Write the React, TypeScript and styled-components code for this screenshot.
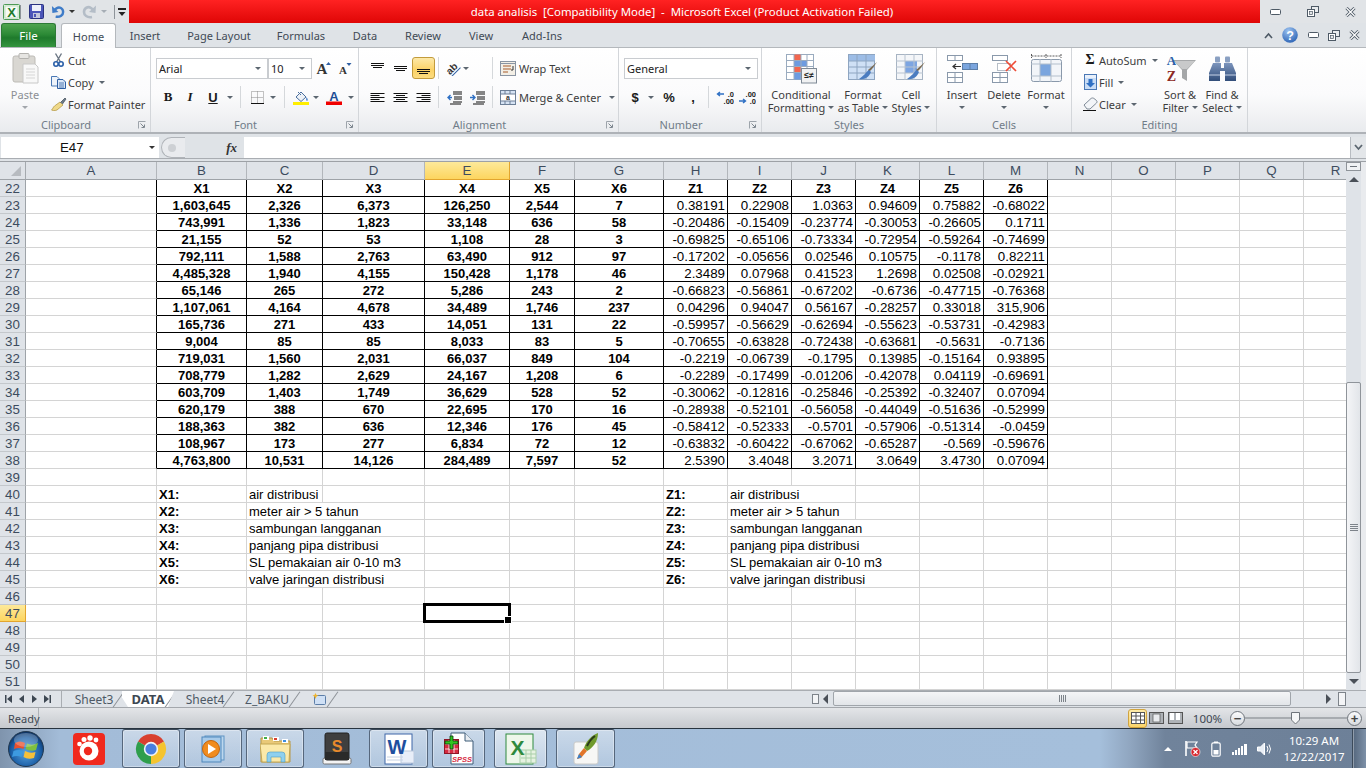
import React from "react";
import styled, { createGlobalStyle } from "styled-components";

const UI_FONT = `"Noto Sans", "Open Sans", sans-serif`;
const CELL_FONT = `"Liberation Sans", Arial, sans-serif`;

const GlobalStyle = createGlobalStyle`
  html, body { margin: 0; padding: 0; background: #dfe3e7; overflow: hidden; }
  * { box-sizing: border-box; }
`;

const Window = styled.div`
  width: 1366px;
  height: 768px;
  display: flex;
  flex-direction: column;
  overflow: hidden;
  background: #dfe3e7;
  font-family: ${UI_FONT};
  font-size: 11px;
  color: #3c3c3c;
`;

/* ---------- title bar ---------- */
const TitleBar = styled.div`
  height: 23px;
  flex: none;
  display: flex;
  background: #e1e4e7;
`;
const Qat = styled.div`
  width: 129px;
  flex: none;
  display: flex;
  align-items: center;
  padding-left: 2px;
`;
const QatSlot = styled.div<{ $w: number }>`
  width: ${(p) => p.$w}px;
  height: 20px;
  flex: none;
  display: flex;
  align-items: center;
  justify-content: center;
`;
const QatSep = styled.div`
  width: 1px;
  height: 14px;
  background: #8d9399;
  flex: none;
`;
const TitleRed = styled.div`
  flex: 1;
  display: flex;
  align-items: center;
  justify-content: center;
  padding-right: 25px;
  background: linear-gradient(#ff2222, #df0606);
  color: #fff;
  font-size: 11.4px;
  white-space: pre;
`;
const WinControls = styled.div`
  width: 106px;
  flex: none;
  display: flex;
  align-items: center;
  padding: 0 10px 0 10px;
  justify-content: space-between;
`;

/* ---------- tabs ---------- */
const TabStrip = styled.div`
  height: 25px;
  flex: none;
  display: flex;
  align-items: flex-end;
  padding-left: 1px;
  background: #dfe3e7;
  border-bottom: 1px solid #b4b8bc;
`;
const FileTab = styled.div`
  width: 55px;
  height: 24px;
  margin-right: 5px;
  display: flex;
  align-items: center;
  justify-content: center;
  color: #fff;
  font-size: 11.5px;
  border: 1px solid #2d7a36;
  border-bottom: none;
  border-radius: 3px 3px 0 0;
  background: linear-gradient(#4ea44f, #2c8a36 45%, #1f7a2c 60%, #35963f);
`;
const Tab = styled.div<{ $w: number; $active?: boolean }>`
  width: ${(p) => p.$w}px;
  height: ${(p) => (p.$active ? 25 : 24)}px;
  display: flex;
  align-items: center;
  justify-content: center;
  font-size: 11px;
  color: #3f4a55;
  ${(p) =>
    p.$active &&
    `background: linear-gradient(#fff, #fbfbfc);
     border: 1px solid #b4b8bc;
     border-bottom: none;
     border-radius: 3px 3px 0 0;
     margin-bottom: -1px;
     position: relative;`}
`;
const TabRight = styled.div`
  margin-left: auto;
  width: 112px;
  height: 24px;
  display: flex;
  align-items: center;
  justify-content: space-between;
  padding: 0 6px 0 10px;
`;

/* ---------- ribbon ---------- */
const Ribbon = styled.div`
  height: 86px;
  flex: none;
  display: flex;
  background: linear-gradient(#ffffff 0, #fbfbfc 55%, #e9ebee 100%);
  border-bottom: 2px solid #aeb2b7;
`;
const Group = styled.div<{ $w: number }>`
  width: ${(p) => p.$w}px;
  flex: none;
  display: flex;
  flex-direction: column;
  position: relative;
  border-right: 1px solid #d3d6da;
`;
const GroupBody = styled.div<{ $pl?: number; $top?: number; $row?: boolean }>`
  flex: 1;
  display: flex;
  flex-direction: ${(p) => (p.$row ? "row" : "column")};
  padding-left: ${(p) => p.$pl ?? 0}px;
  padding-top: ${(p) => p.$top ?? 0}px;
  gap: ${(p) => (p.$row ? 0 : 7)}px;
`;
const GroupLabel = styled.div<{ $launch?: boolean }>`
  height: 14px;
  flex: none;
  text-align: center;
  line-height: 14px;
  padding-right: ${(p) => (p.$launch ? 18 : 0)}px;
  color: #707c88;
  font-size: 11px;
`;
const Launcher = styled.div`
  position: absolute;
  right: 4px;
  bottom: 3px;
  line-height: 0;
`;
const ToolRow = styled.div`
  height: 22px;
  display: flex;
  align-items: center;
`;
const Tool = styled.div<{ $w: number; $ml?: number; $on?: boolean }>`
  width: ${(p) => p.$w}px;
  height: 22px;
  flex: none;
  margin-left: ${(p) => p.$ml ?? 0}px;
  display: flex;
  align-items: center;
  justify-content: center;
  gap: 2px;
  color: #111;
  ${(p) =>
    p.$on &&
    `background: linear-gradient(#fde9a8, #fbd266 60%, #fcdc80);
     border: 1px solid #c29b3c;
     border-radius: 3px;`}
`;
const ToolSep = styled.div<{ $w: number; $ml?: number }>`
  width: ${(p) => p.$w}px;
  margin-left: ${(p) => p.$ml ?? 0}px;
  height: 22px;
  flex: none;
  display: flex;
  justify-content: center;
  &::after {
    content: "";
    width: 1px;
    height: 100%;
    background: #d5d8db;
  }
`;
const Combo = styled.div<{ $w: number }>`
  width: ${(p) => p.$w}px;
  height: 21px;
  flex: none;
  display: flex;
  align-items: center;
  justify-content: space-between;
  padding: 0 6px 0 2px;
  background: #fff;
  border: 1px solid #c9ccd0;
  color: #222;
  font-size: 11px;
`;
const Caret = styled.span<{ $c?: string }>`
  display: inline-block;
  flex: none;
  width: 0;
  height: 0;
  border-left: 3px solid transparent;
  border-right: 3px solid transparent;
  border-top: 3px solid ${(p) => p.$c ?? "#5c6670"};
`;
const PasteCaret = styled(Caret)`
  margin-top: 5px;
`;
const TrayCaret = styled.span`
  width: 0;
  height: 0;
  border-left: 4px solid transparent;
  border-right: 4px solid transparent;
  border-bottom: 4px solid #fff;
`;
const BoldGlyph = styled.span<{ $serif?: boolean; $italic?: boolean; $under?: boolean; $size?: number }>`
  font-family: ${(p) => (p.$serif ? `"Liberation Serif", serif` : CELL_FONT)};
  font-weight: 700;
  font-style: ${(p) => (p.$italic ? "italic" : "normal")};
  font-size: ${(p) => p.$size ?? 13}px;
  text-decoration: ${(p) => (p.$under ? "underline" : "none")};
  color: #1a1a1a;
`;
const SmallStack = styled.div<{ $w: number; $pl?: number }>`
  width: ${(p) => p.$w}px;
  flex: none;
  padding-left: ${(p) => p.$pl ?? 0}px;
  display: flex;
  flex-direction: column;
`;
const SmallItem = styled.div<{ $iconW?: number }>`
  height: 22px;
  display: flex;
  align-items: center;
  white-space: nowrap;
  & > :first-child {
    width: ${(p) => p.$iconW ?? 19}px;
    flex: none;
  }
`;
const IconWrap = styled.span`
  display: flex;
  justify-content: center;
`;
const CaretGap = styled.span`
  display: inline-flex;
  margin-left: 5px;
`;
const TextTool = styled.div`
  display: flex;
  align-items: center;
  padding-left: 5px;
  height: 22px;
  gap: 3px;
  white-space: nowrap;
  color: #3c3c3c;
`;
const PasteBtn = styled.div`
  width: 36px;
  margin-left: 7px;
  flex: none;
  display: flex;
  flex-direction: column;
  align-items: center;
  color: #8b8f94;
  padding-top: 4px;
`;
const PasteText = styled.div`
  margin-top: 4px;
  line-height: 13px;
`;
const Large = styled.div<{ $w: number }>`
  width: ${(p) => p.$w}px;
  flex: none;
  display: flex;
  flex-direction: column;
  align-items: center;
  color: #3c3c3c;
`;
const LargeIcon = styled.div`
  height: 39px;
  display: flex;
  align-items: center;
  justify-content: center;
`;
const LargeLine = styled.div`
  height: 13px;
  line-height: 13px;
  white-space: nowrap;
  display: flex;
  align-items: center;
  justify-content: center;
  gap: 3px;
`;
const RibbonRest = styled.div`
  flex: 1;
`;

/* ---------- formula bar ---------- */
const FormulaBar = styled.div`
  height: 21px;
  margin-top: 3px;
  flex: none;
  display: flex;
  background: #dfe3e7;
`;
const NameBox = styled.div`
  width: 158px;
  margin-left: 1px;
  flex: none;
  background: #fff;
  display: flex;
  align-items: center;
  justify-content: space-between;
  padding: 0 4px 0 59px;
  font-family: ${CELL_FONT};
  font-size: 13.3px;
  color: #111;
`;
const FxBox = styled.div`
  width: 85px;
  flex: none;
  display: flex;
  align-items: center;
  justify-content: flex-end;
  padding-right: 7px;
  position: relative;
  background: #dfe3e7;
  font-family: "Liberation Serif", serif;
  font-style: italic;
  font-weight: 700;
  font-size: 13px;
  color: #333;
`;
const Knob = styled.div`
  position: absolute;
  left: 2px;
  top: 0;
  width: 24px;
  height: 21px;
  border: 1px solid #b0b4b9;
  border-right: none;
  border-radius: 11px 0 0 11px;
  background: #e9ebee;
  &::after {
    content: "";
    position: absolute;
    left: 6px;
    top: 6px;
    width: 8px;
    height: 8px;
    border-radius: 50%;
    background: #cdd0d4;
  }
`;
const FormulaInput = styled.div`
  flex: 1;
  background: #fff;
`;
const ExpandBtn = styled.div`
  width: 16px;
  flex: none;
  display: flex;
  align-items: center;
  justify-content: center;
  border-left: 1px solid #b8bcc1;
  background: #e3e6e9;
`;
const FormulaGap = styled.div`
  height: 3px;
  flex: none;
  background: #dfe3e7;
  border-top: 1px solid #a9adb2;
`;

/* ---------- sheet ---------- */
const SheetArea = styled.div`
  height: 529px;
  flex: none;
  display: flex;
  border-top: 1px solid #9da1a6;
`;
const GridPane = styled.div`
  width: 1346px;
  flex: none;
  overflow: hidden;
  position: relative;
  background: #fff;
  font-family: ${CELL_FONT};
  font-size: 13.33px;
  color: #000;
`;
const COLS = [
  { l: "A", w: 131 },
  { l: "B", w: 90 },
  { l: "C", w: 76 },
  { l: "D", w: 102 },
  { l: "E", w: 85 },
  { l: "F", w: 65 },
  { l: "G", w: 89 },
  { l: "H", w: 64 },
  { l: "I", w: 64 },
  { l: "J", w: 64 },
  { l: "K", w: 64 },
  { l: "L", w: 64 },
  { l: "M", w: 64 },
  { l: "N", w: 64 },
  { l: "O", w: 64 },
  { l: "P", w: 64 },
  { l: "Q", w: 64 },
  { l: "R", w: 64 },
];
const GRID_TEMPLATE = `26px ${COLS.map((c) => c.w + "px").join(" ")}`;
const SheetRow = styled.div<{ $h: number }>`
  display: grid;
  grid-template-columns: ${GRID_TEMPLATE};
  height: ${(p) => p.$h}px;
  width: 1500px;
`;
const HEAD_BG = "#dfe3e8";
const SEL_BG = "linear-gradient(#fde99a, #fdd55f)";
const Corner = styled.div`
  background: ${HEAD_BG};
  border-right: 1px solid #a4a9ae;
  border-bottom: 1px solid #9ea3a8;
  position: relative;
  &::after {
    content: "";
    position: absolute;
    right: 4px;
    bottom: 3px;
    width: 0;
    height: 0;
    border-left: 10px solid transparent;
    border-bottom: 10px solid #b7bbc0;
  }
`;
const ColHead = styled.div<{ $sel?: boolean }>`
  background: ${(p) => (p.$sel ? SEL_BG : HEAD_BG)};
  border-right: 1px solid ${(p) => (p.$sel ? "#e2a52e" : "#b2b6bb")};
  border-bottom: 1px solid ${(p) => (p.$sel ? "#e2a52e" : "#9ea3a8")};
  display: flex;
  align-items: center;
  justify-content: center;
  color: #3d4c5e;
`;
const RowHead = styled.div<{ $sel?: boolean }>`
  background: ${(p) => (p.$sel ? SEL_BG : HEAD_BG)};
  border-right: 1px solid ${(p) => (p.$sel ? "#e2a52e" : "#9ea3a8")};
  border-bottom: 1px solid ${(p) => (p.$sel ? "#e2a52e" : "#c4c8cc")};
  display: flex;
  align-items: center;
  justify-content: center;
  color: #3d4c5e;
`;
const Cell = styled.div<{
  $right?: boolean;
  $bottom?: boolean;
  $align?: string;
  $bold?: boolean;
  $span?: number;
  $legend?: boolean;
}>`
  position: relative;
  grid-column: span ${(p) => p.$span ?? 1};
  border-right: 1px solid ${(p) => (p.$right ? "#000" : "#d4d4d4")};
  border-bottom: 1px solid ${(p) => (p.$bottom ? "#000" : "#d4d4d4")};
  display: flex;
  align-items: center;
  justify-content: ${(p) => p.$align ?? "flex-start"};
  padding: 0 2px;
  font-weight: ${(p) => (p.$bold ? 700 : 400)};
  font-size: ${(p) => (p.$bold || p.$legend ? 13 : 13.33)}px;
  white-space: nowrap;
`;
const Cursor = styled.div`
  position: absolute;
  left: -2px;
  top: -2px;
  width: 88px;
  height: 20px;
  border: 3px solid #000;
  z-index: 2;
  &::after {
    content: "";
    position: absolute;
    right: -4px;
    bottom: -4px;
    width: 6px;
    height: 6px;
    background: #000;
    border: 1px solid #fff;
  }
`;
const VScroll = styled.div`
  width: 15px;
  flex: none;
  display: flex;
  flex-direction: column;
  align-items: center;
  background: #dfe3e8;
`;
const SplitBox = styled.div`
  width: 15px;
  height: 9px;
  flex: none;
  background: #f0f2f4;
  border: 1px solid #8e9399;
  display: flex;
  align-items: center;
  justify-content: center;
  &::after {
    content: "";
    width: 7px;
    height: 1px;
    background: #6d737a;
  }
`;
const ArrowUp = styled.div`
  margin-top: 6px;
  width: 0;
  height: 0;
  border-left: 5px solid transparent;
  border-right: 5px solid transparent;
  border-bottom: 5px solid #4a5058;
`;
const ArrowDown = styled.div`
  margin-top: 6px;
  width: 0;
  height: 0;
  border-left: 5px solid transparent;
  border-right: 5px solid transparent;
  border-top: 5px solid #4a5058;
`;
const VThumb = styled.div`
  margin-top: 200px;
  width: 15px;
  height: 291px;
  flex: none;
  background: linear-gradient(90deg, #f4f5f7, #e2e5e9);
  border: 1px solid #8f949a;
  border-radius: 2px;
  display: flex;
  align-items: center;
  justify-content: center;
`;
const GripLines = styled.div<{ $vertical?: boolean }>`
  width: ${(p) => (p.$vertical ? 7 : 8)}px;
  height: 7px;
  background: repeating-linear-gradient(
    ${(p) => (p.$vertical ? "90deg" : "0deg")},
    #7d838a 0 1px,
    transparent 1px 2px
  );
`;
const RightEdge = styled.div`
  width: 5px;
  flex: none;
  background: #e9ebee;
`;

/* ---------- sheet tabs + h scroll ---------- */
const SheetBar = styled.div`
  height: 17px;
  flex: none;
  display: flex;
  align-items: stretch;
  background: #dfe3e8;
  border-top: 1px solid #a9adb2;
`;
const NavArrows = styled.div`
  width: 62px;
  flex: none;
  padding: 0 10px 0 5px;
  display: flex;
  align-items: center;
  justify-content: space-between;
  border-right: 1px solid #a9adb2;
`;
const SheetTab = styled.div<{ $w: number; $active?: boolean }>`
  width: ${(p) => p.$w}px;
  flex: none;
  position: relative;
  display: flex;
  align-items: center;
  justify-content: center;
  padding-left: 4px;
  font-size: ${(p) => (p.$active ? 13 : 12)}px;
  font-weight: ${(p) => (p.$active ? 700 : 400)};
  color: ${(p) => (p.$active ? "#3d4752" : "#4d5966")};
  ${(p) =>
    p.$active
      ? `background: #fff;
     clip-path: polygon(0 0, 100% 0, calc(100% - 6px) 100%, 6px 100%, 0 40%);
     padding-left: 0;`
      : ""}
  &::after {
    content: "";
    position: absolute;
    right: 3px;
    top: -1px;
    height: 19px;
    width: 1px;
    background: #8d9298;
    transform: rotate(35deg);
  }
`;
const HSpacer = styled.div`
  flex: 1;
`;
const HSplit = styled.div`
  width: 7px;
  margin: 3px 4px 3px 0;
  flex: none;
  background: #f3f4f6;
  border: 1px solid #7d838a;
`;
const HArrow = styled.div<{ $left?: boolean; $ml?: number }>`
  width: 0;
  height: 0;
  flex: none;
  align-self: center;
  margin-left: ${(p) => p.$ml ?? 0}px;
  border-top: 5px solid transparent;
  border-bottom: 5px solid transparent;
  ${(p) => (p.$left ? "border-right" : "border-left")}: 5px solid #4a5058;
`;
const HThumb = styled.div`
  width: 458px;
  margin: 0 0 1px 5px;
  flex: none;
  background: linear-gradient(#f4f5f7, #e2e5e9);
  border: 1px solid #a0a5ab;
  border-radius: 2px;
  display: flex;
  align-items: center;
  justify-content: center;
`;
const HEndBox = styled.div`
  width: 8px;
  margin: 1px 20px 1px 7px;
  flex: none;
  background: #f3f4f6;
  border: 1px solid #7d838a;
`;

/* ---------- status bar ---------- */
const StatusBar = styled.div`
  height: 21px;
  flex: none;
  display: flex;
  align-items: center;
  background: linear-gradient(#e3e5e8, #c6c9ce);
  border-top: 1px solid #a3a7ac;
  color: #3d4752;
  font-size: 11px;
`;
const ReadyText = styled.div`
  width: 39px;
  flex: none;
  height: 100%;
  display: flex;
  align-items: center;
  padding-left: 8px;
  border-right: 1px solid #aeb2b7;
`;
const StatusRight = styled.div`
  margin-left: auto;
  display: flex;
  align-items: center;
  height: 100%;
  padding-right: 4px;
`;
const ViewBtn = styled.div<{ $on?: boolean }>`
  width: 19px;
  height: 19px;
  display: flex;
  align-items: center;
  justify-content: center;
  ${(p) =>
    p.$on &&
    `background: linear-gradient(#fdeaa8, #fbd46b);
     border: 1px solid #d0a33f;
     border-radius: 3px;`}
`;
const ZoomPct = styled.div`
  width: 45px;
  text-align: center;
  font-size: 11.5px;
`;
const ZoomCircle = styled.div`
  width: 15px;
  height: 15px;
  border-radius: 50%;
  flex: none;
  border: 1px solid #6e747b;
  background: linear-gradient(#fbfbfc, #d8dbdf);
  display: flex;
  align-items: center;
  justify-content: center;
  font: 700 13px/1 ${CELL_FONT};
  color: #444;
`;
const ZoomTrack = styled.div`
  width: 102px;
  height: 15px;
  position: relative;
  display: flex;
  align-items: center;
  &::before {
    content: "";
    width: 100%;
    height: 2px;
    background: #a7abb0;
  }
`;
const ZoomThumb = styled.div`
  position: absolute;
  left: 46px;
  top: 1px;
  line-height: 0;
`;

/* ---------- taskbar ---------- */
const Taskbar = styled.div`
  height: 40px;
  flex: none;
  display: flex;
  align-items: stretch;
  background: linear-gradient(90deg, #7f94ad 0, #a3bcd8 60px, #a5bfdb 1100px, #90a6c0 1130px, #70839b 1165px, #6d8098 1366px);
  border-top: 1px solid #28333f;
`;
const Orb = styled.div`
  width: 52px;
  flex: none;
  padding-left: 8px;
  display: flex;
  align-items: center;
`;
const PlainIcon = styled.div<{ $w: number; $ml?: number }>`
  width: ${(p) => p.$w}px;
  margin-left: ${(p) => p.$ml ?? 0}px;
  flex: none;
  display: flex;
  align-items: center;
  justify-content: center;
`;
const TaskBtn = styled.div<{ $w: number; $ml?: number; $active?: boolean }>`
  width: ${(p) => p.$w}px;
  margin-left: ${(p) => p.$ml ?? 0}px;
  flex: none;
  display: flex;
  align-items: center;
  justify-content: center;
  border: 1px solid #56677c;
  border-top-color: #3c4a5a;
  border-radius: 3px;
  background: linear-gradient(
    rgba(255, 255, 255, ${(p) => (p.$active ? 0.62 : 0.42)}),
    rgba(255, 255, 255, ${(p) => (p.$active ? 0.3 : 0.14)})
  );
  box-shadow: inset 0 0 0 1px rgba(255, 255, 255, 0.35);
`;
const Tray = styled.div`
  margin-left: auto;
  display: flex;
  align-items: center;
`;
const TrayIcon = styled.div`
  width: 24px;
  flex: none;
  display: flex;
  align-items: center;
  justify-content: center;
`;
const Clock = styled.div`
  width: 76px;
  flex: none;
  text-align: center;
  color: #fff;
  font-size: 11.5px;
  line-height: 16px;
`;
const ShowDesktop = styled.div`
  width: 14px;
  height: 100%;
  flex: none;
  background: linear-gradient(90deg, #55677d, #7e91a8);
  border-left: 1px solid #3c4a5a;
  box-shadow: inset 1px 0 0 rgba(255, 255, 255, 0.35);
`;

/* ---------- drawn icons ---------- */
const Ico: React.FC<{ w: number; h: number; children: React.ReactNode }> = ({ w, h, children }) => (
  <svg width={w} height={h} viewBox={`0 0 ${w} ${h}`} style={{ display: "block" }}>
    {children}
  </svg>
);

const AppExcel = () => (
  <Ico w={17} h={18}>
    <rect x="0.5" y="1.5" width="16" height="15" rx="1" fill="#e9f4e6" stroke="#4d9a55" />
    <rect x="2" y="3" width="13" height="12" fill="#f7fbf5" stroke="#a3cda6" strokeWidth="0.6" />
    <text x="8.5" y="14" textAnchor="middle" fontSize="13" fontWeight="700" fontFamily="Liberation Sans" fill="#1f7a2c">X</text>
  </Ico>
);
const SaveIcon = () => (
  <Ico w={15} h={15}>
    <rect x="0.5" y="0.5" width="14" height="14" rx="1" fill="#4b55b8" stroke="#2b3280" />
    <rect x="3" y="1" width="9" height="6" fill="#eef0fa" />
    <rect x="4" y="9" width="7" height="5" fill="#c3c7dc" />
    <rect x="5" y="10" width="2" height="3" fill="#4b55b8" />
  </Ico>
);
const UndoIcon: React.FC<{ c?: string; flip?: boolean }> = ({ c = "#3f7cc8", flip }) => (
  <Ico w={15} h={15}>
    <g transform={flip ? "translate(15,0) scale(-1,1)" : undefined}>
      <path d="M5 13 C10 14 13 11 13 8 C13 4 9 2 6 4 L3.5 6" fill="none" stroke={c} strokeWidth="2.6" />
      <path d="M1 1.5 L1.5 9 L8 8 Z" fill={c} />
    </g>
  </Ico>
);
const CustomizeIcon = () => (
  <Ico w={8} h={10}>
    <rect x="0" y="1" width="8" height="2" fill="#222" />
    <path d="M0.5 5 H7.5 L4 9 Z" fill="#222" />
  </Ico>
);
const MinIcon: React.FC<{ w?: number }> = ({ w = 11 }) => (
  <Ico w={w} h={6}>
    <rect x="0.5" y="0.5" width={w - 1} height="5" rx="1" fill="#fff" stroke="#4e5a66" />
  </Ico>
);
const RestoreIcon = () => (
  <Ico w={12} h={11}>
    <rect x="4.5" y="0.5" width="7" height="6" fill="#e8ebee" stroke="#4e5a66" />
    <rect x="0.5" y="3.5" width="7" height="7" fill="#fff" stroke="#4e5a66" />
    <rect x="2.5" y="5.5" width="3" height="3" fill="#e1e4e7" stroke="#4e5a66" strokeWidth="0.7" />
  </Ico>
);
const CloseIcon = () => (
  <Ico w={11} h={10}>
    <path d="M1.5 1 L9.5 9 M9.5 1 L1.5 9" stroke="#4e5a66" strokeWidth="3" />
    <path d="M1.5 1 L9.5 9 M9.5 1 L1.5 9" stroke="#fff" strokeWidth="1.2" />
  </Ico>
);
const ChevUp = () => (
  <Ico w={9} h={7}>
    <path d="M1 6 L4.5 2 L8 6" fill="none" stroke="#4e5a66" strokeWidth="1.6" />
  </Ico>
);
const ChevDown = () => (
  <Ico w={9} h={7}>
    <path d="M1 1 L4.5 5 L8 1" fill="none" stroke="#5c6670" strokeWidth="1.8" />
  </Ico>
);
const HelpIcon = () => (
  <Ico w={16} h={16}>
    <defs>
      <radialGradient id="hlp" cx="40%" cy="25%" r="80%">
        <stop offset="0" stopColor="#9dc3f0" />
        <stop offset="1" stopColor="#2a62b4" />
      </radialGradient>
    </defs>
    <circle cx="8" cy="8" r="7.8" fill="url(#hlp)" />
    <text x="8" y="12.5" textAnchor="middle" fontSize="12.5" fontWeight="700" fontFamily="Liberation Sans" fill="#fff">?</text>
  </Ico>
);
const PasteIcon = () => (
  <Ico w={27} h={31}>
    <rect x="1" y="3" width="22" height="26" rx="2" fill="#d9d7d2" stroke="#bdbbb6" />
    <rect x="7" y="0.5" width="10" height="5" rx="1" fill="#e6e5e2" stroke="#b3b2ae" />
    <path d="M11 11 H23 L26 14 V30 H11 Z" fill="#f8f8f8" stroke="#c8c8c8" />
    <path d="M14 16 H23 M14 19 H23 M14 22 H23 M14 25 H23" stroke="#d6d6d6" />
  </Ico>
);
const CutIcon = () => (
  <Ico w={11} h={14}>
    <path d="M2.5 0.5 L7.5 9 M8.5 0.5 L3.5 9" stroke="#6c7784" strokeWidth="1.4" />
    <circle cx="3" cy="11" r="2.2" fill="none" stroke="#2a5fa8" strokeWidth="1.6" />
    <circle cx="8" cy="11" r="2.2" fill="none" stroke="#2a5fa8" strokeWidth="1.6" />
  </Ico>
);
const CopyIcon = () => (
  <Ico w={15} h={13}>
    <path d="M0.5 0.5 H6 L8 2.5 V10 H0.5 Z" fill="#eef3fa" stroke="#4a78b5" />
    <path d="M6.5 3.5 H12 L14.5 6 V12.5 H6.5 Z" fill="#dbe7f7" stroke="#2f5fa3" />
    <path d="M8 7 H13 M8 9 H13 M8 11 H13" stroke="#2f5fa3" strokeWidth="0.8" />
  </Ico>
);
const PainterIcon = () => (
  <Ico w={16} h={14}>
    <path d="M9 5 L12 8 L6 13 C4 14 1 13.5 0.5 13 C2 12 2 10 3.5 9 Z" fill="#efd98a" stroke="#ad9038" strokeWidth="0.7" />
    <path d="M9.5 5.5 L14 1 L15 2 L11.5 7" fill="#6d7b8a" stroke="#3f4a55" strokeWidth="0.7" />
  </Ico>
);
const LauncherIcon = () => (
  <Ico w={8} h={8}>
    <path d="M0.5 7.5 V0.5 H7.5" fill="none" stroke="#9da4ab" />
    <path d="M2.5 2.5 L6 6 M6.5 3.5 V6.5 H3.5" fill="none" stroke="#7d868f" />
  </Ico>
);
const GrowIcon: React.FC<{ small?: boolean }> = ({ small }) => (
  <Ico w={16} h={16}>
    <text x="6" y="14" textAnchor="middle" fontSize={small ? 11 : 15} fontWeight="700" fontFamily="Liberation Serif" fill="#333">A</text>
    <path d={small ? "M9.5 3 H14.5 L12 6 Z" : "M10 5 H15 L12.5 2 Z"} fill="#2f5fa3" />
  </Ico>
);
const BordersIcon = () => (
  <Ico w={13} h={13}>
    <rect x="0.5" y="0.5" width="12" height="12" fill="none" stroke="#888" strokeDasharray="1 1" />
    <path d="M6.5 0.5 V12.5 M0.5 6.5 H12.5" stroke="#888" strokeDasharray="1 1" />
    <path d="M0 12.5 H13" stroke="#111" />
  </Ico>
);
const FillIcon = () => (
  <Ico w={16} h={15}>
    <path d="M3 7 L8 2 L13 7 L8 11.5 Z" fill="#eef2f7" stroke="#4b6f9e" />
    <path d="M5 2 L8 5" stroke="#4b6f9e" />
    <path d="M13.5 7 C15 9 15 10.5 14 11 C13 10.5 13 9 13.5 7 Z" fill="#3e79c6" />
    <rect x="0" y="12" width="16" height="3.5" fill="#ffee00" />
  </Ico>
);
const ColorIcon = () => (
  <Ico w={16} h={15}>
    <text x="8" y="11" textAnchor="middle" fontSize="13" fontWeight="700" fontFamily="Liberation Sans" fill="#1e4f96">A</text>
    <rect x="0" y="11.5" width="16" height="3.5" fill="#f00000" />
  </Ico>
);
const Lines: React.FC<{ rows: [number, number, number][] }> = ({ rows }) => (
  <Ico w={15} h={15}>
    {rows.map(([x, y, w], i) => (
      <rect key={i} x={x} y={y} width={w} height="1" fill="#111" />
    ))}
  </Ico>
);
const VA = (top: number): [number, number, number][] => [
  [1, top, 13],
  [1, top + 2, 13],
  [3, top + 4, 9],
];
const H = (kind: "l" | "c" | "r"): [number, number, number][] =>
  [0, 1, 2, 3, 4].map((i) => {
    const w = i % 2 ? 9 : 14;
    const x = kind === "l" ? 0.5 : kind === "r" ? 14.5 - w : (15 - w) / 2;
    return [x, 3 + i * 2, w] as [number, number, number];
  });
const OrientIcon = () => (
  <Ico w={17} h={15}>
    <g transform="rotate(-45 8 8)">
      <text x="8" y="11" textAnchor="middle" fontSize="10" fontWeight="700" fontFamily="Liberation Sans" fill="#333">ab</text>
      <path d="M2 13 H15" stroke="#2f5fa3" />
    </g>
  </Ico>
);
const IndentIcon: React.FC<{ inc?: boolean }> = ({ inc }) => (
  <Ico w={16} h={15}>
    <path d="M6 2 H15 M6 4 H15 M7 7 H15 M7 9 H15 M6 12 H15 M3 14 H14" stroke="#111" />
    <path d={inc ? "M0 7.5 H4 M2.5 5 L5 7.5 L2.5 10" : "M5 7.5 H1 M3.5 5 L1 7.5 L3.5 10"} fill="none" stroke="#2f70c4" strokeWidth="1.4" />
  </Ico>
);
const WrapIcon = () => (
  <Ico w={16} h={15}>
    <rect x="0.5" y="0.5" width="15" height="14" fill="#f3efe6" stroke="#8a95a3" />
    <path d="M1 2.5 H15" stroke="#8a95a3" />
    <path d="M3 5 H11 M3 8 H11 M3 11 H8" stroke="#a85d2a" strokeWidth="1.2" />
    <path d="M13 5 V9 H11" fill="none" stroke="#333" />
  </Ico>
);
const MergeIcon = () => (
  <Ico w={16} h={15}>
    <rect x="0.5" y="0.5" width="15" height="14" fill="#d6e3f3" stroke="#6c7f97" />
    <rect x="1" y="4" width="14" height="7" fill="#fff" />
    <path d="M1 4 H15 M1 11 H15 M5 1 V4 M10 1 V4 M5 11 V14 M10 11 V14" stroke="#6c7f97" />
    <text x="8" y="10" textAnchor="middle" fontSize="7" fontWeight="700" fontFamily="Liberation Sans" fill="#333">a</text>
  </Ico>
);
const DecIcon: React.FC<{ more?: boolean }> = ({ more }) => (
  <Ico w={18} h={15}>
    <text x="18" y="6.5" textAnchor="end" fontSize="7.5" fontWeight="700" fontFamily="Liberation Sans" fill="#222">{more ? ".00" : ".0"}</text>
    <text x="18" y="14" textAnchor="end" fontSize="7.5" fontWeight="700" fontFamily="Liberation Sans" fill="#222">{more ? ".0" : ".00"}</text>
    <path d={more ? "M1 11 H7 M5 9 L7.5 11 L5 13" : "M8 4 H2 M4 2 L1.5 4 L4 6"} fill="none" stroke="#2f70c4" strokeWidth="1.4" />
  </Ico>
);
const CondIcon = () => (
  <Ico w={31} h={30}>
    <rect x="0.5" y="0.5" width="27" height="25" fill="#fff" stroke="#9aabbf" />
    <rect x="8" y="0.5" width="7" height="6" fill="#f2664e" />
    <rect x="8" y="6.5" width="13" height="6" fill="#6d9be0" />
    <rect x="8" y="12.5" width="7" height="6" fill="#f2664e" />
    <rect x="8" y="18.5" width="7" height="7" fill="#6d9be0" />
    <path d="M8 0 V26 M15 0 V26 M21 0 V26 M0 6.5 H28 M0 12.5 H28 M0 18.5 H28" stroke="#9aabbf" />
    <rect x="15.5" y="14.5" width="15" height="14.5" fill="#f1f2f3" stroke="#7f8a96" />
    <text x="23" y="24" textAnchor="middle" fontSize="8.5" fontWeight="700" fontFamily="Liberation Sans" fill="#222">≤≠</text>
  </Ico>
);
const TableIcon = () => (
  <Ico w={30} h={29}>
    <rect x="0.5" y="0.5" width="26" height="25" fill="#cfe0f5" stroke="#8ea5c1" />
    <rect x="1" y="1" width="26" height="6" fill="#9dbde6" />
    <path d="M9 0 V26 M18 0 V26 M0 7 H27 M0 13 H27 M0 19 H27" stroke="#8ea5c1" />
    <path d="M29 8 L24 15 L21 18 L20 16 Z" fill="#7b6a52" />
    <path d="M21 16 C18 18 16 22 11 25 C17 26 21 23 23 18 Z" fill="#4a7cc0" />
  </Ico>
);
const CellStylesIcon = () => (
  <Ico w={30} h={29}>
    <rect x="0.5" y="0.5" width="26" height="25" fill="#f4f6f9" stroke="#a7b4c3" />
    <rect x="9" y="7" width="12" height="12" fill="#7da5e2" />
    <path d="M9 0 V26 M18 0 V26 M0 7 H27 M0 13 H27 M0 19 H27" stroke="#b8c3d0" />
    <path d="M29 8 L24 15 L21 18 L20 16 Z" fill="#7b6a52" />
    <path d="M21 16 C18 18 16 22 11 25 C17 26 21 23 23 18 Z" fill="#4a7cc0" />
  </Ico>
);
const InsertIcon = () => (
  <Ico w={31} h={28}>
    <rect x="0.5" y="0.5" width="15" height="5" fill="#fff" stroke="#8a99ab" />
    <path d="M8 0 V6" stroke="#8a99ab" />
    <rect x="15.5" y="8.5" width="15" height="6" fill="#7aa5de" stroke="#5c7ea8" />
    <path d="M23 8 V15" stroke="#5c7ea8" />
    <path d="M14 11.5 H6 M9 9 L6 11.5 L9 14" fill="none" stroke="#333" strokeWidth="1.2" />
    <rect x="0.5" y="17.5" width="15" height="10" fill="#fff" stroke="#8a99ab" />
    <path d="M8 17 V28 M0 22.5 H15" stroke="#8a99ab" />
  </Ico>
);
const DeleteIcon = () => (
  <Ico w={25} h={28}>
    <rect x="0.5" y="0.5" width="15" height="5" fill="#fff" stroke="#8a99ab" />
    <rect x="5.5" y="8.5" width="13" height="7" fill="#fff" stroke="#6f7e90" strokeDasharray="1 1" />
    <rect x="0.5" y="17.5" width="15" height="10" fill="#fff" stroke="#8a99ab" />
    <path d="M8 17 V28 M0 22.5 H15" stroke="#8a99ab" />
    <path d="M14 6 L24 16 M24 6 L14 16" stroke="#ee4b36" strokeWidth="1.7" />
  </Ico>
);
const FormatCellIcon = () => (
  <Ico w={31} h={30}>
    <path d="M0.5 2 H30 M0.5 0 V4 M15 0 V4 M30 0 V4" stroke="#333" strokeWidth="0.8" strokeDasharray="2 1" />
    <rect x="0.5" y="5.5" width="30" height="22" rx="2" fill="#f2f5f9" stroke="#8a99ab" />
    <rect x="9" y="10" width="11" height="12" fill="#7aa5de" />
    <path d="M9 5 V28 M20 5 V28 M0 10 H30 M0 22 H30" stroke="#b3bfcc" />
  </Ico>
);
const SigmaIcon = () => (
  <IconWrap>
    <BoldGlyph $serif $size={14}>Σ</BoldGlyph>
  </IconWrap>
);
const FillDownIcon = () => (
  <Ico w={13} h={16}>
    <rect x="0.5" y="0.5" width="12" height="15" fill="#c8dcf5" stroke="#4a78b5" />
    <rect x="1" y="1" width="11" height="3" fill="#e8f0fb" />
    <path d="M4.5 5 H8.5 V9 H11 L6.5 13.5 L2 9 H4.5 Z" fill="#2f70c4" />
  </Ico>
);
const EraserIcon = () => (
  <Ico w={15} h={14}>
    <path d="M1 8 L8 1.5 C9 .8 10 .8 11 1.5 L13.5 3.5 C14.2 4.4 14.2 5 13.5 6 L7 12 H4 Z" fill="#f3f5f8" stroke="#7f8a96" />
    <path d="M0 13.5 H13" stroke="#111" />
  </Ico>
);
const SortIcon = () => (
  <Ico w={31} h={29}>
    <path d="M8 6 H31 L22 16 V27 L17 24 V16 Z" fill="#a5a7a9" />
    <path d="M9 7 H30 L22 15 H17 Z" fill="#c8c9ca" />
    <text x="6.5" y="11" textAnchor="middle" fontSize="13" fontWeight="700" fontFamily="Liberation Serif" fill="#2a5fa8">A</text>
    <text x="6.5" y="27" textAnchor="middle" fontSize="14" fontWeight="700" fontFamily="Liberation Serif" fill="#8c2a25">Z</text>
  </Ico>
);
const FindIcon = () => (
  <Ico w={29} h={26}>
    <defs>
      <linearGradient id="bin" x1="0" x2="0" y1="0" y2="1">
        <stop offset="0" stopColor="#7c95bd" />
        <stop offset="1" stopColor="#314d79" />
      </linearGradient>
    </defs>
    <rect x="7" y="0.5" width="5" height="6" rx="1" fill="#8aa0c2" />
    <rect x="17" y="0.5" width="5" height="6" rx="1" fill="#8aa0c2" />
    <path d="M5 7 H13 V12 H16 V7 H24 L28 17 V25 H17 V15 H12 V25 H1 V17 Z" fill="url(#bin)" />
    <path d="M1 19 H12 M17 19 H28" stroke="#c6d3e6" />
  </Ico>
);
const NavIcon: React.FC<{ d: string }> = ({ d }) => (
  <Ico w={7} h={8}>
    <path d={d} fill="#3d4752" />
  </Ico>
);
const NewSheetIcon = () => (
  <Ico w={15} h={13}>
    <rect x="2.5" y="2.5" width="11" height="9" rx="1" fill="#cfe0f5" stroke="#5c7ea8" />
    <path d="M3.5 0 L4.5 2 L6.5 2.5 L4.5 3.5 L3.5 6 L2.5 3.5 L0.5 2.5 L2.5 2 Z" fill="#efb42d" />
  </Ico>
);
const NormalViewIcon = () => (
  <Ico w={14} h={12}>
    <rect x="0.5" y="0.5" width="13" height="11" fill="#fff" stroke="#555" />
    <path d="M5 0 V12 M9.5 0 V12 M0 4 H14 M0 8 H14" stroke="#555" />
  </Ico>
);
const PageViewIcon = () => (
  <Ico w={15} h={12}>
    <rect x="0.5" y="0.5" width="14" height="11" fill="#aeb2b7" stroke="#555" />
    <rect x="4" y="2" width="7" height="8" fill="#e9ebee" stroke="#555" strokeWidth="0.7" />
  </Ico>
);
const BreakViewIcon = () => (
  <Ico w={15} h={12}>
    <rect x="0.5" y="0.5" width="14" height="11" fill="#aeb2b7" stroke="#555" />
    <rect x="2" y="1" width="4" height="7" fill="#fff" />
    <rect x="8" y="1" width="4" height="7" fill="#fff" />
  </Ico>
);
const SliderThumb = () => (
  <Ico w={9} h={13}>
    <path d="M0.5 0.5 H8.5 V8 L4.5 12 L0.5 8 Z" fill="#f5f6f7" stroke="#6e747b" />
  </Ico>
);
const OrbIcon = () => (
  <Ico w={36} h={36}>
    <defs>
      <radialGradient id="orb" cx="50%" cy="60%" r="60%">
        <stop offset="0" stopColor="#5aa4e0" />
        <stop offset="0.7" stopColor="#1a5ea6" />
        <stop offset="1" stopColor="#0c2f5e" />
      </radialGradient>
    </defs>
    <circle cx="18" cy="18" r="17.5" fill="url(#orb)" stroke="#22384f" />
    <path d="M7 12 Q12 9 17 12 L15.5 18 Q11 16 6 18 Z" fill="#e8502e" />
    <path d="M19 12.5 Q24 15 30 12 L28 19 Q23 21 17.5 18 Z" fill="#7fc040" />
    <path d="M5.5 20 Q10.5 18 15 20 L13.5 26 Q9 24 4 26 Z" fill="#3d9ae0" />
    <path d="M17 20 Q22 23 27.5 21 L26 27 Q20 29 15.5 26 Z" fill="#f6c03a" />
    <ellipse cx="18" cy="9" rx="12" ry="7" fill="#fff" opacity="0.25" />
  </Ico>
);
const GomIcon = () => (
  <Ico w={32} h={32}>
    <rect x="0" y="0" width="32" height="32" rx="4" fill="#f0291e" />
    <circle cx="6.5" cy="11" r="2.3" fill="#fff" />
    <circle cx="11" cy="6.5" r="2.5" fill="#fff" />
    <circle cx="17" cy="5" r="2.7" fill="#fff" />
    <circle cx="23" cy="7" r="2.4" fill="#fff" />
    <circle cx="16" cy="18" r="9.5" fill="#fff" />
    <circle cx="15" cy="18" r="4.2" fill="#f0291e" />
  </Ico>
);
const ChromeIcon = () => (
  <Ico w={32} h={32}>
    <path d="M16 16 L3 8.5 A15 15 0 0 1 29 8.5 Z" fill="#d8402f" />
    <path d="M16 16 L29 8.5 A15 15 0 0 1 16 31 Z" fill="#f5c42f" />
    <path d="M16 16 L16 31 A15 15 0 0 1 3 8.5 Z" fill="#2f9e4c" />
    <circle cx="16" cy="16" r="7.2" fill="#f2f4f7" />
    <circle cx="16" cy="16" r="5.6" fill="#4a7fe0" />
  </Ico>
);
const WmpIcon = () => (
  <Ico w={28} h={30}>
    <rect x="6" y="2" width="19" height="24" fill="#bcd7ee" stroke="#5e94c4" />
    <rect x="3" y="3" width="19" height="25" fill="#a8cbea" stroke="#4f87bb" />
    <circle cx="12" cy="15" r="8.5" fill="#f08c1f" stroke="#c2650f" />
    <path d="M9 10 L17 15 L9 20 Z" fill="#fff" />
  </Ico>
);
const FolderIcon = () => (
  <Ico w={31} h={28}>
    <path d="M1 3 H12 L14 6 H30 V27 H1 Z" fill="#e9c978" stroke="#b5974b" />
    <rect x="3" y="1" width="6" height="4" fill="#fff" />
    <rect x="4" y="2" width="3" height="2" fill="#3dad4c" />
    <rect x="13" y="2" width="6" height="4" fill="#fff" />
    <rect x="14" y="3" width="3" height="2" fill="#d8402f" />
    <rect x="22" y="4" width="6" height="4" fill="#fff" />
    <rect x="23" y="5" width="3" height="2" fill="#3d8ee0" />
    <path d="M0 9 H30 L29 27 H2 Z" fill="#fbe9a9" stroke="#c3a755" />
    <path d="M7 27 V20 Q7 17 10 17 H22 Q25 17 25 20 V27 H21 V22 H11 V27 Z" fill="#8fd0ee" stroke="#4a9ac4" strokeWidth="0.6" />
  </Ico>
);
const SublimeIcon = () => (
  <Ico w={30} h={34}>
    <rect x="1" y="26" width="28" height="6" rx="1.5" fill="#f4f4f4" stroke="#777" />
    <rect x="3" y="1" width="24" height="27" rx="2" fill="#3f3f3f" stroke="#222" />
    <rect x="3" y="20" width="24" height="8" fill="#2a2a2a" />
    <text x="15" y="20" textAnchor="middle" fontSize="16" fontWeight="700" fontFamily="Liberation Sans" fill="#e98a2c">S</text>
  </Ico>
);
const WordIcon = () => (
  <Ico w={30} h={32}>
    <rect x="1" y="1" width="27" height="30" fill="#fff" stroke="#3f67a8" />
    <rect x="17" y="18" width="13" height="12" fill="#e8eef8" stroke="#bcc9dc" />
    <path d="M3 24 H19 M3 27 H19" stroke="#c6d2e4" />
    <text x="13" y="21" textAnchor="middle" fontSize="20" fontWeight="700" fontFamily="Liberation Sans" fill="#1f4f9e">W</text>
  </Ico>
);
const SpssIcon = () => (
  <Ico w={30} h={33}>
    <path d="M7 1 H21 L29 9 V32 H7 Z" fill="#fff" stroke="#3e5c78" />
    <path d="M21 1 V9 H29" fill="#e6ebf0" stroke="#3e5c78" />
    <rect x="0.5" y="7.5" width="14" height="14" fill="#d62b41" stroke="#8f1526" />
    <path d="M5 8 V21 M10 8 V21 M1 12 H14 M1 17 H14" stroke="#fff" strokeWidth="0.8" />
    <path d="M6 4 H9 V9 H14 V12 H9 V17 H6 V12 H1 V9 H6 Z" fill="#2fc41f" stroke="#0c3d0a" strokeWidth="0.8" />
    <text x="18" y="30" textAnchor="middle" fontSize="7.5" fontWeight="700" fontStyle="italic" fontFamily="Liberation Sans" fill="#d62b41">SPSS</text>
  </Ico>
);
const ExcelBigIcon = () => (
  <Ico w={32} h={32}>
    <rect x="1" y="1" width="27" height="30" fill="#eef7ea" stroke="#2f8a3e" />
    <rect x="15" y="17" width="16" height="13" fill="#e6f2e1" stroke="#a9cfa9" />
    <path d="M16 21 H31 M16 25 H31 M21 17 V30 M26 17 V30" stroke="#a9cfa9" />
    <text x="12.5" y="22" textAnchor="middle" fontSize="21" fontWeight="700" fontFamily="Liberation Sans" fill="#2f8a3e">X</text>
  </Ico>
);
const PaintIcon = () => (
  <Ico w={28} h={32}>
    <rect x="2" y="9" width="24" height="22" rx="2" fill="#f7f7f5" stroke="#c9c9c7" />
    <path d="M26 0 C20 2 14 8 12 15 L15 18 C21 15 26 8 26 0 Z" fill="#6f9a2c" />
    <path d="M23 3 C20 5 17 9 15 13" stroke="#2b3a1a" strokeWidth="2" fill="none" />
    <path d="M12 15 L15 18 L9 25 L5 26 L7 21 Z" fill="#e2762a" />
    <path d="M7 21 L10 24 L5 26 Z" fill="#3a83cc" />
  </Ico>
);
const TrayFlag = () => (
  <Ico w={17} h={18}>
    <path d="M2 1 V16" stroke="#fff" strokeWidth="1.6" />
    <path d="M3 2 H13 L11 5 L13 8 H3 Z" fill="none" stroke="#fff" strokeWidth="1.2" />
    <circle cx="11.5" cy="12" r="4.5" fill="#d8262c" stroke="#fff" strokeWidth="0.6" />
    <path d="M9.5 10 L13.5 14 M13.5 10 L9.5 14" stroke="#fff" strokeWidth="1.3" />
  </Ico>
);
const TrayBattery = () => (
  <Ico w={10} h={16}>
    <rect x="0.8" y="1.8" width="8.4" height="13.4" rx="1.5" fill="none" stroke="#fff" strokeWidth="1.2" />
    <rect x="3" y="0.5" width="4" height="1.5" fill="#fff" />
    <rect x="2.5" y="9" width="5" height="4.5" fill="#fff" />
  </Ico>
);
const TraySignal = () => (
  <Ico w={16} h={12}>
    <rect x="0" y="9" width="2" height="3" fill="#fff" />
    <rect x="3" y="7" width="2" height="5" fill="#fff" />
    <rect x="6" y="5" width="2" height="7" fill="#fff" />
    <rect x="9" y="3" width="2" height="9" fill="#fff" />
    <rect x="12" y="1" width="3" height="11" fill="#fff" />
  </Ico>
);
const TraySpeaker = () => (
  <Ico w={15} h={14}>
    <path d="M0.5 5 H3.5 L7.5 1 V13 L3.5 9 H0.5 Z" fill="#e8eef5" stroke="#fff" />
    <path d="M10 4 Q12 7 10 10 M12 2.5 Q15 7 12 11.5" fill="none" stroke="#fff" />
  </Ico>
);

/* ---------- data ---------- */
const X_ROWS = [
  ["X1", "X2", "X3", "X4", "X5", "X6"],
  ["1,603,645", "2,326", "6,373", "126,250", "2,544", "7"],
  ["743,991", "1,336", "1,823", "33,148", "636", "58"],
  ["21,155", "52", "53", "1,108", "28", "3"],
  ["792,111", "1,588", "2,763", "63,490", "912", "97"],
  ["4,485,328", "1,940", "4,155", "150,428", "1,178", "46"],
  ["65,146", "265", "272", "5,286", "243", "2"],
  ["1,107,061", "4,164", "4,678", "34,489", "1,746", "237"],
  ["165,736", "271", "433", "14,051", "131", "22"],
  ["9,004", "85", "85", "8,033", "83", "5"],
  ["719,031", "1,560", "2,031", "66,037", "849", "104"],
  ["708,779", "1,282", "2,629", "24,167", "1,208", "6"],
  ["603,709", "1,403", "1,749", "36,629", "528", "52"],
  ["620,179", "388", "670", "22,695", "170", "16"],
  ["188,363", "382", "636", "12,346", "176", "45"],
  ["108,967", "173", "277", "6,834", "72", "12"],
  ["4,763,800", "10,531", "14,126", "284,489", "7,597", "52"],
];
const Z_ROWS = [
  ["Z1", "Z2", "Z3", "Z4", "Z5", "Z6"],
  ["0.38191", "0.22908", "1.0363", "0.94609", "0.75882", "-0.68022"],
  ["-0.20486", "-0.15409", "-0.23774", "-0.30053", "-0.26605", "0.1711"],
  ["-0.69825", "-0.65106", "-0.73334", "-0.72954", "-0.59264", "-0.74699"],
  ["-0.17202", "-0.05656", "0.02546", "0.10575", "-0.1178", "0.82211"],
  ["2.3489", "0.07968", "0.41523", "1.2698", "0.02508", "-0.02921"],
  ["-0.66823", "-0.56861", "-0.67202", "-0.6736", "-0.47715", "-0.76368"],
  ["0.04296", "0.94047", "0.56167", "-0.28257", "0.33018", "315,906"],
  ["-0.59957", "-0.56629", "-0.62694", "-0.55623", "-0.53731", "-0.42983"],
  ["-0.70655", "-0.63828", "-0.72438", "-0.63681", "-0.5631", "-0.7136"],
  ["-0.2219", "-0.06739", "-0.1795", "0.13985", "-0.15164", "0.93895"],
  ["-0.2289", "-0.17499", "-0.01206", "-0.42078", "0.04119", "-0.69691"],
  ["-0.30062", "-0.12816", "-0.25846", "-0.25392", "-0.32407", "0.07094"],
  ["-0.28938", "-0.52101", "-0.56058", "-0.44049", "-0.51636", "-0.52999"],
  ["-0.58412", "-0.52333", "-0.5701", "-0.57906", "-0.51314", "-0.0459"],
  ["-0.63832", "-0.60422", "-0.67062", "-0.65287", "-0.569", "-0.59676"],
  ["2.5390", "3.4048", "3.2071", "3.0649", "3.4730", "0.07094"],
];
const LEGEND = [
  "air distribusi",
  "meter air > 5 tahun",
  "sambungan langganan",
  "panjang pipa distribusi",
  "SL pemakaian air 0-10 m3",
  "valve jaringan distribusi",
];
const X_SPAN = [1, 2, 2, 2, 2, 2];
const Z_SPAN = [2, 2, 3, 3, 3, 3];

const blanks = (from: number, to: number) => COLS.slice(from, to).map((c) => <Cell key={c.l} />);

function DataRow({ row }: { row: number }) {
  const i = row - 22;
  const header = i === 0;
  return (
    <SheetRow $h={17}>
      <RowHead>{row}</RowHead>
      <Cell $right />
      {X_ROWS[i].map((v, n) => (
        <Cell key={"x" + n} $right $bottom $bold $align="center">
          {v}
        </Cell>
      ))}
      {Z_ROWS[i].map((v, n) => (
        <Cell key={"z" + n} $right $bottom $bold={header} $align={header ? "center" : "flex-end"}>
          {v}
        </Cell>
      ))}
      {blanks(13, 18)}
    </SheetRow>
  );
}

function LegendRow({ row }: { row: number }) {
  const i = row - 40;
  return (
    <SheetRow $h={17}>
      <RowHead>{row}</RowHead>
      <Cell />
      <Cell $bold>X{i + 1}:</Cell>
      <Cell $legend $span={X_SPAN[i]}>{LEGEND[i]}</Cell>
      {X_SPAN[i] === 1 && <Cell />}
      {blanks(4, 7)}
      <Cell $bold>Z{i + 1}:</Cell>
      <Cell $legend $span={Z_SPAN[i]}>{LEGEND[i]}</Cell>
      {Z_SPAN[i] === 2 && <Cell />}
      {blanks(11, 18)}
    </SheetRow>
  );
}

function PlainRow({ row }: { row: number }) {
  const sel = row === 47;
  return (
    <SheetRow $h={17}>
      <RowHead $sel={sel}>{row}</RowHead>
      {COLS.map((c) => (
        <Cell key={c.l}>{sel && c.l === "E" && <Cursor />}</Cell>
      ))}
    </SheetRow>
  );
}

const rowNumbers = Array.from({ length: 30 }, (_, n) => 22 + n);
const TABS = [
  { t: "Insert", w: 58 },
  { t: "Page Layout", w: 90 },
  { t: "Formulas", w: 74 },
  { t: "Data", w: 54 },
  { t: "Review", w: 62 },
  { t: "View", w: 54 },
  { t: "Add-Ins", w: 68 },
];

export default function App() {
  return (
    <Window>
      <GlobalStyle />
      <TitleBar>
        <Qat>
          <QatSlot $w={18}><AppExcel /></QatSlot>
          <QatSep />
          <QatSlot $w={30}><SaveIcon /></QatSlot>
          <QatSlot $w={14}><UndoIcon /></QatSlot>
          <QatSlot $w={14}><Caret $c="#333" /></QatSlot>
          <QatSlot $w={20}><UndoIcon c="#b4bdc7" flip /></QatSlot>
          <QatSlot $w={10}><Caret $c="#a6adb5" /></QatSlot>
          <QatSlot $w={5} />
          <QatSep />
          <QatSlot $w={14}><CustomizeIcon /></QatSlot>
        </Qat>
        <TitleRed>data analisis  [Compatibility Mode]  -  Microsoft Excel (Product Activation Failed)</TitleRed>
        <WinControls>
          <MinIcon />
          <RestoreIcon />
          <CloseIcon />
        </WinControls>
      </TitleBar>

      <TabStrip>
        <FileTab>File</FileTab>
        <Tab $w={55} $active>Home</Tab>
        {TABS.map((t) => (
          <Tab key={t.t} $w={t.w}>{t.t}</Tab>
        ))}
        <TabRight>
          <ChevUp />
          <HelpIcon />
          <MinIcon />
          <RestoreIcon />
          <CloseIcon />
        </TabRight>
      </TabStrip>

      <Ribbon>
        <Group $w={151}>
          <GroupBody $row $top={1}>
            <PasteBtn>
              <PasteIcon />
              <PasteText>Paste</PasteText>
              <PasteCaret $c="#a2a6ab" />
            </PasteBtn>
            <SmallStack $w={100} $pl={6}>
              <SmallItem><IconWrap><CutIcon /></IconWrap>Cut</SmallItem>
              <SmallItem><IconWrap><CopyIcon /></IconWrap>Copy<CaretGap><Caret /></CaretGap></SmallItem>
              <SmallItem><IconWrap><PainterIcon /></IconWrap>Format Painter</SmallItem>
            </SmallStack>
          </GroupBody>
          <GroupLabel $launch>Clipboard</GroupLabel>
          <Launcher><LauncherIcon /></Launcher>
        </Group>

        <Group $w={208}>
          <GroupBody $pl={5} $top={9}>
            <ToolRow>
              <Combo $w={112}>Arial<Caret /></Combo>
              <Combo $w={44}>10<Caret /></Combo>
              <Tool $w={20} $ml={2}><GrowIcon /></Tool>
              <Tool $w={22}><GrowIcon small /></Tool>
            </ToolRow>
            <ToolRow>
              <Tool $w={24}><BoldGlyph $serif>B</BoldGlyph></Tool>
              <Tool $w={20}><BoldGlyph $serif $italic>I</BoldGlyph></Tool>
              <Tool $w={26}><BoldGlyph $under>U</BoldGlyph></Tool>
              <Tool $w={8}><Caret /></Tool>
              <ToolSep $w={12} />
              <Tool $w={22}><BordersIcon /></Tool>
              <Tool $w={10}><Caret /></Tool>
              <ToolSep $w={12} />
              <Tool $w={22}><FillIcon /></Tool>
              <Tool $w={8}><Caret /></Tool>
              <Tool $w={28}><ColorIcon /></Tool>
              <Tool $w={6}><Caret /></Tool>
            </ToolRow>
          </GroupBody>
          <GroupLabel $launch>Font</GroupLabel>
          <Launcher><LauncherIcon /></Launcher>
        </Group>

        <Group $w={260}>
          <GroupBody $pl={7} $top={9}>
            <ToolRow>
              <Tool $w={23}><Lines rows={VA(2)} /></Tool>
              <Tool $w={23}><Lines rows={VA(5)} /></Tool>
              <Tool $w={23} $on><Lines rows={VA(8)} /></Tool>
              <ToolSep $w={6} />
              <Tool $w={30}><OrientIcon /><Caret /></Tool>
              <ToolSep $w={6} $ml={18} />
              <TextTool><WrapIcon />Wrap Text</TextTool>
            </ToolRow>
            <ToolRow>
              <Tool $w={23}><Lines rows={H("l")} /></Tool>
              <Tool $w={23}><Lines rows={H("c")} /></Tool>
              <Tool $w={23}><Lines rows={H("r")} /></Tool>
              <ToolSep $w={6} />
              <Tool $w={27}><IndentIcon /></Tool>
              <Tool $w={19}><IndentIcon inc /></Tool>
              <ToolSep $w={6} $ml={2} />
              <TextTool><MergeIcon />Merge &amp; Center<CaretGap><Caret /></CaretGap></TextTool>
            </ToolRow>
          </GroupBody>
          <GroupLabel $launch>Alignment</GroupLabel>
          <Launcher><LauncherIcon /></Launcher>
        </Group>

        <Group $w={143}>
          <GroupBody $pl={5} $top={9}>
            <ToolRow>
              <Combo $w={134}>General<Caret /></Combo>
            </ToolRow>
            <ToolRow>
              <Tool $w={22}><BoldGlyph $size={13}>$</BoldGlyph></Tool>
              <Tool $w={10}><Caret /></Tool>
              <Tool $w={26}><BoldGlyph $size={13}>%</BoldGlyph></Tool>
              <Tool $w={22}><BoldGlyph $size={13}>,</BoldGlyph></Tool>
              <ToolSep $w={8} />
              <Tool $w={22} $ml={2}><DecIcon /></Tool>
              <Tool $w={22}><DecIcon more /></Tool>
            </ToolRow>
          </GroupBody>
          <GroupLabel $launch>Number</GroupLabel>
          <Launcher><LauncherIcon /></Launcher>
        </Group>

        <Group $w={175}>
          <GroupBody $row $top={1}>
            <Large $w={78}>
              <LargeIcon><CondIcon /></LargeIcon>
              <LargeLine>Conditional</LargeLine>
              <LargeLine>Formatting<Caret /></LargeLine>
            </Large>
            <Large $w={46}>
              <LargeIcon><TableIcon /></LargeIcon>
              <LargeLine>Format</LargeLine>
              <LargeLine>as Table<Caret /></LargeLine>
            </Large>
            <Large $w={50}>
              <LargeIcon><CellStylesIcon /></LargeIcon>
              <LargeLine>Cell</LargeLine>
              <LargeLine>Styles<Caret /></LargeLine>
            </Large>
          </GroupBody>
          <GroupLabel>Styles</GroupLabel>
        </Group>

        <Group $w={135}>
          <GroupBody $row $top={1}>
            <Large $w={50}>
              <LargeIcon><InsertIcon /></LargeIcon>
              <LargeLine>Insert</LargeLine>
              <LargeLine><Caret /></LargeLine>
            </Large>
            <Large $w={34}>
              <LargeIcon><DeleteIcon /></LargeIcon>
              <LargeLine>Delete</LargeLine>
              <LargeLine><Caret /></LargeLine>
            </Large>
            <Large $w={50}>
              <LargeIcon><FormatCellIcon /></LargeIcon>
              <LargeLine>Format</LargeLine>
              <LargeLine><Caret /></LargeLine>
            </Large>
          </GroupBody>
          <GroupLabel>Cells</GroupLabel>
        </Group>

        <Group $w={176}>
          <GroupBody $row $top={1}>
            <SmallStack $w={87} $pl={9}>
              <SmallItem $iconW={18}><SigmaIcon />AutoSum<CaretGap><Caret /></CaretGap></SmallItem>
              <SmallItem $iconW={18}><IconWrap><FillDownIcon /></IconWrap>Fill<CaretGap><Caret /></CaretGap></SmallItem>
              <SmallItem $iconW={18}><IconWrap><EraserIcon /></IconWrap>Clear<CaretGap><Caret /></CaretGap></SmallItem>
            </SmallStack>
            <Large $w={42}>
              <LargeIcon><SortIcon /></LargeIcon>
              <LargeLine>Sort &amp;</LargeLine>
              <LargeLine>Filter<Caret /></LargeLine>
            </Large>
            <Large $w={42}>
              <LargeIcon><FindIcon /></LargeIcon>
              <LargeLine>Find &amp;</LargeLine>
              <LargeLine>Select<Caret /></LargeLine>
            </Large>
          </GroupBody>
          <GroupLabel>Editing</GroupLabel>
        </Group>
        <RibbonRest />
      </Ribbon>

      <FormulaBar>
        <NameBox>E47<Caret $c="#333" /></NameBox>
        <FxBox><Knob />fx</FxBox>
        <FormulaInput />
        <ExpandBtn><ChevDown /></ExpandBtn>
      </FormulaBar>
      <FormulaGap />

      <SheetArea>
        <GridPane>
          <SheetRow $h={18}>
            <Corner />
            {COLS.map((c) => (
              <ColHead key={c.l} $sel={c.l === "E"}>{c.l}</ColHead>
            ))}
          </SheetRow>
          {rowNumbers.map((r) =>
            r <= 38 ? <DataRow key={r} row={r} /> : r >= 40 && r <= 45 ? <LegendRow key={r} row={r} /> : <PlainRow key={r} row={r} />
          )}
        </GridPane>
        <VScroll>
          <SplitBox />
          <ArrowUp />
          <VThumb><GripLines /></VThumb>
          <ArrowDown />
        </VScroll>
        <RightEdge />
      </SheetArea>

      <SheetBar>
        <NavArrows>
          <NavIcon d="M0 0 H1.5 V8 H0 Z M7 0 V8 L2 4 Z" />
          <NavIcon d="M6 0 V8 L1 4 Z" />
          <NavIcon d="M1 0 V8 L6 4 Z" />
          <NavIcon d="M0 0 V8 L5 4 Z M5.5 0 H7 V8 H5.5 Z" />
        </NavArrows>
        <SheetTab $w={60}>Sheet3</SheetTab>
        <SheetTab $w={52} $active>DATA</SheetTab>
        <SheetTab $w={58}>Sheet4</SheetTab>
        <SheetTab $w={66}>Z_BAKU</SheetTab>
        <SheetTab $w={38}><NewSheetIcon /></SheetTab>
        <HSpacer />
        <HSplit />
        <HArrow $left />
        <HThumb><GripLines $vertical /></HThumb>
        <HArrow $ml={35} />
        <HEndBox />
      </SheetBar>

      <StatusBar>
        <ReadyText>Ready</ReadyText>
        <StatusRight>
          <ViewBtn $on><NormalViewIcon /></ViewBtn>
          <ViewBtn><PageViewIcon /></ViewBtn>
          <ViewBtn><BreakViewIcon /></ViewBtn>
          <ZoomPct>100%</ZoomPct>
          <ZoomCircle>−</ZoomCircle>
          <ZoomTrack><ZoomThumb><SliderThumb /></ZoomThumb></ZoomTrack>
          <ZoomCircle>+</ZoomCircle>
        </StatusRight>
      </StatusBar>

      <Taskbar>
        <Orb><OrbIcon /></Orb>
        <PlainIcon $w={32} $ml={21}><GomIcon /></PlainIcon>
        <TaskBtn $w={58} $ml={17}><ChromeIcon /></TaskBtn>
        <TaskBtn $w={58} $ml={4}><WmpIcon /></TaskBtn>
        <TaskBtn $w={58} $ml={4}><FolderIcon /></TaskBtn>
        <PlainIcon $w={30} $ml={18}><SublimeIcon /></PlainIcon>
        <TaskBtn $w={59} $ml={17}><WordIcon /></TaskBtn>
        <TaskBtn $w={53} $ml={4}><SpssIcon /></TaskBtn>
        <TaskBtn $w={53} $ml={9} $active><ExcelBigIcon /></TaskBtn>
        <TaskBtn $w={59} $ml={9}><PaintIcon /></TaskBtn>
        <Tray>
          <TrayIcon><TrayCaret /></TrayIcon>
          <TrayIcon><TrayFlag /></TrayIcon>
          <TrayIcon><TrayBattery /></TrayIcon>
          <TrayIcon><TraySignal /></TrayIcon>
          <TrayIcon><TraySpeaker /></TrayIcon>
          <Clock>10:29 AM<br />12/22/2017</Clock>
          <ShowDesktop />
        </Tray>
      </Taskbar>
    </Window>
  );
}
